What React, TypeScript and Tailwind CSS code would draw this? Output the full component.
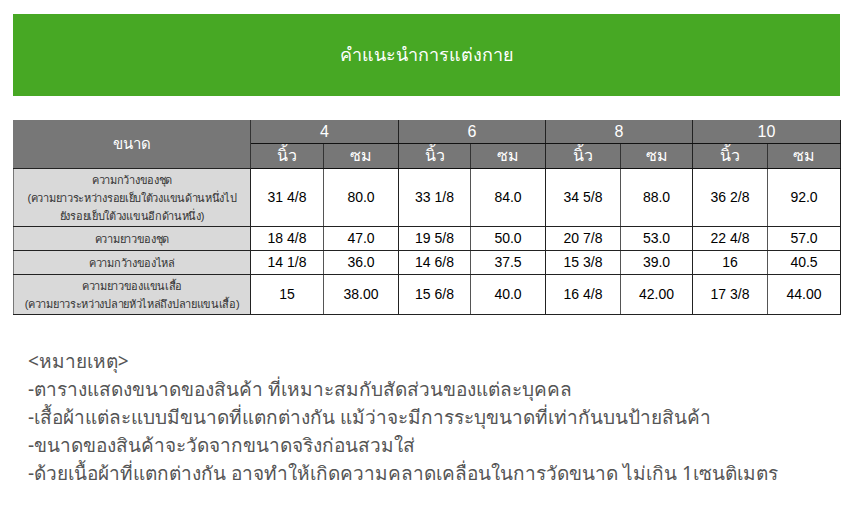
import React from "react";

type Row = {
  label: string[];
  h: string;
  values: string[];
};

const rows: Row[] = [
  {
    label: [
      "ความกว้างของชุด",
      "(ความยาวระหว่างรอยเย็บใต้วงแขนด้านหนึ่งไป",
      "ยังรอยเย็บใต้วงแขนอีกด้านหนึ่ง)",
    ],
    h: "h-[58px]",
    values: ["31 4/8", "80.0", "33 1/8", "84.0", "34 5/8", "88.0", "36 2/8", "92.0"],
  },
  {
    label: ["ความยาวของชุด"],
    h: "h-[24px]",
    values: ["18 4/8", "47.0", "19 5/8", "50.0", "20 7/8", "53.0", "22 4/8", "57.0"],
  },
  {
    label: ["ความกว้างของไหล่"],
    h: "h-[24px]",
    values: ["14 1/8", "36.0", "14 6/8", "37.5", "15 3/8", "39.0", "16", "40.5"],
  },
  {
    label: ["ความยาวของแขนเสื้อ", "(ความยาวระหว่างปลายหัวไหล่ถึงปลายแขนเสื้อ)"],
    h: "h-[40px]",
    values: ["15", "38.00", "15 6/8", "40.0", "16 4/8", "42.00", "17 3/8", "44.00"],
  },
];

const sizes = ["4", "6", "8", "10"];

const notes = [
  "<หมายเหตุ>",
  "-ตารางแสดงขนาดของสินค้า ที่เหมาะสมกับสัดส่วนของแต่ละบุคคล",
  "-เสื้อผ้าแต่ละแบบมีขนาดที่แตกต่างกัน แม้ว่าจะมีการระบุขนาดที่เท่ากันบนป้ายสินค้า",
  "-ขนาดของสินค้าจะวัดจากขนาดจริงก่อนสวมใส่",
  "-ด้วยเนื้อผ้าที่แตกต่างกัน อาจทำให้เกิดความคลาดเคลื่อนในการวัดขนาด ไม่เกิน 1เซนติเมตร",
];

export default function App() {
  return (
    <div className="w-[858px] h-[512px] bg-white font-['Liberation_Sans',_'Noto_Sans',_sans-serif] overflow-hidden">
      {/* Banner */}
      <div className="pt-[14px] px-[13px] w-[853px]">
        <div className="h-[82px] bg-[#47a824] flex items-center justify-center text-white text-[18px]">
          คำแนะนำการแต่งกาย
        </div>
      </div>

      {/* Size table */}
      <div className="pt-[24px] pl-[13px]">
        <table className="border-collapse table-fixed w-[827px] border border-[#777] text-[14px] text-black">
          <colgroup>
            <col className="w-[237px]" />
            <col className="w-[73px]" />
            <col className="w-[75px]" />
            <col className="w-[72px]" />
            <col className="w-[75px]" />
            <col className="w-[75px]" />
            <col className="w-[72px]" />
            <col className="w-[75px]" />
            <col className="w-[73px]" />
          </colgroup>
          <thead>
            <tr className="h-[23px] bg-[#777] text-white text-[16px]">
              <th rowSpan={2} className="font-normal text-[15px] border-r border-[#333] border-b border-b-[#222]">
                ขนาด
              </th>
              {sizes.map((s) => (
                <th key={s} colSpan={2} className="font-normal border-r border-[#222] border-b border-b-[#111] leading-none">
                  {s}
                </th>
              ))}
            </tr>
            <tr className="h-[25px] bg-[#777] text-white text-[16px]">
              {sizes.map((s) => (
                <React.Fragment key={s}>
                  <th className="font-normal border-r border-[#333] border-b border-b-[#111] leading-none">นิ้ว</th>
                  <th className="font-normal border-r border-[#222] border-b border-b-[#111] leading-none">ซม</th>
                </React.Fragment>
              ))}
            </tr>
          </thead>
          <tbody>
            {rows.map((r, i) => (
              <tr key={i} className={r.h}>
                <td className="bg-[#d9d9d9] text-[#333] text-[11px] tracking-[-0.3px] leading-[18px] text-center border border-[#222] border-l-[#777] overflow-hidden">
                  {r.label.map((l, j) => (
                    <div key={j} className="whitespace-nowrap">{l}</div>
                  ))}
                </td>
                {r.values.map((v, j) => (
                  <td
                    key={j}
                    className={`text-center border-b border-[#222] ${j % 2 === 1 ? "border-r border-r-[#222]" : "border-r border-r-[#555]"}`}
                  >
                    {v}
                  </td>
                ))}
              </tr>
            ))}
          </tbody>
        </table>
      </div>

      {/* Notes */}
      <div className="pl-[28px] pt-[32px] text-[#555] text-[19px] leading-[28px] font-['Noto_Sans',_'Liberation_Sans',_sans-serif]">
        {notes.map((n, i) => (
          <div key={i} className="whitespace-nowrap">{n}</div>
        ))}
      </div>
    </div>
  );
}
